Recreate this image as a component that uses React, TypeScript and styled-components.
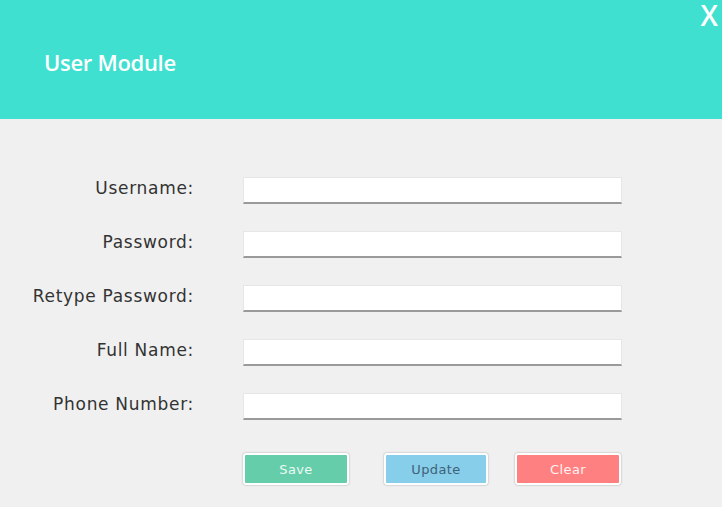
import React, { useState } from "react";
import styled, { createGlobalStyle } from "styled-components";

const Global = createGlobalStyle`
  html, body { margin: 0; padding: 0; background: #f0f0f0; }
  body { font-family: "DejaVu Sans", "Liberation Sans", sans-serif; }
`;

const FIELDS = [
  { id: "username", label: "Username:", type: "text" },
  { id: "password", label: "Password:", type: "password" },
  { id: "retype", label: "Retype Password:", type: "password" },
  { id: "fullname", label: "Full Name:", type: "text" },
  { id: "phone", label: "Phone Number:", type: "text" },
];

export default function App() {
  const [values, setValues] = useState<Record<string, string>>({});

  return (
    <Page>
      <Global />
      <Header>
        <Title>User Module</Title>
        <Close>X</Close>
      </Header>
      <Body>
        <Form>
          {FIELDS.map((f) => (
            <React.Fragment key={f.id}>
              <Label htmlFor={f.id}>{f.label}</Label>
              <Input
                id={f.id}
                type={f.type}
                value={values[f.id] || ""}
                onChange={(e) => setValues((s) => ({ ...s, [f.id]: e.target.value }))}
              />
            </React.Fragment>
          ))}
          <span />
          <Actions>
            <Button $bg="#66cdaa" $fg="#eafaf4">Save</Button>
            <Button $bg="#87ceeb" $fg="#3f6178" $w={104}>Update</Button>
            <Button $bg="#ff8080" $fg="#fff1f1">Clear</Button>
          </Actions>
        </Form>
      </Body>
    </Page>
  );
}

const Page = styled.div`width:722px;height:507px;overflow:hidden;background:#f0f0f0;`;
const Header = styled.header`height:119px;background:#40e0d0;display:flex;justify-content:space-between;align-items:flex-start;`;
const Title = styled.h1`margin:48px 0 0 44px;font-family:"Open Sans","Liberation Sans",sans-serif;font-weight:600;font-size:22px;line-height:28px;color:#fff;letter-spacing:-0.3px;`;
const Close = styled.button`border:none;background:none;padding:0;margin:0 4px 0 0;font-family:"Open Sans","Liberation Sans",sans-serif;font-weight:600;font-size:28px;line-height:30px;color:#fff;cursor:pointer;`;
const Body = styled.main`padding-top:58px;`;
const Form = styled.div`display:grid;grid-template-columns:194px 379px;column-gap:49px;row-gap:27px;grid-auto-rows:27px;`;
const Label = styled.label`justify-self:end;align-self:center;margin-top:-6px;font-size:17px;letter-spacing:0.7px;color:#333;white-space:nowrap;`;
const Input = styled.input`box-sizing:border-box;height:27px;margin:0;border:1px solid #e6e6e6;border-bottom:2px solid #9a9a9a;background:#fff;font-size:14px;padding:0 6px;outline:none;`;
const Actions = styled.div`display:flex;gap:0;margin-top:6px;height:32px;& > :nth-child(2){margin:0 27px 0 35px;}`;
const Button = styled.button<{ $bg: string; $fg: string; $w?: number }>`box-sizing:border-box;width:${(p) => p.$w ?? 106}px;height:32px;border:2px solid #fff;border-radius:3px;box-shadow:0 0 2px rgba(0,0,0,0.35);background:${(p) => p.$bg};color:${(p) => p.$fg};font-family:"DejaVu Sans","Liberation Sans",sans-serif;font-size:13px;letter-spacing:0.4px;cursor:pointer;padding:0;`;
